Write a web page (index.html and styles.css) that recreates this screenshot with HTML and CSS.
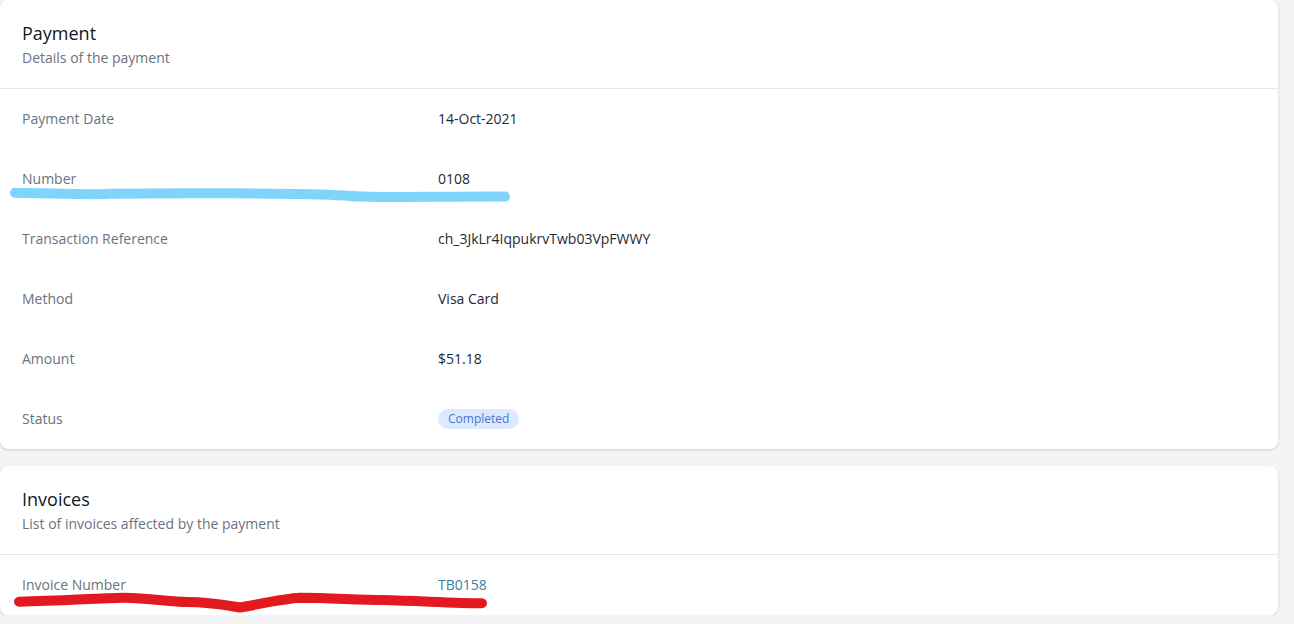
FILE: index.html
```html
<!DOCTYPE html>
<html lang="en">

<head>
    <meta charset="UTF-8">
    <meta name="viewport" content="width=device-width, initial-scale=1.0">
    <title>Payment</title>
    <link rel="stylesheet" href="styles.css">
</head>

<body>
    <div class="page">
        <div class="card">
            <div class="card-header">
                <h2>Payment</h2>
                <p>Details of the payment</p>
            </div>
            <dl class="details">
                <div class="row">
                    <dt>Payment Date</dt>
                    <dd>14-Oct-2021</dd>
                </div>
                <div class="row">
                    <dt>Number</dt>
                    <dd>0108</dd>
                </div>
                <div class="row">
                    <dt>Transaction Reference</dt>
                    <dd>ch_3JkLr4IqpukrvTwb03VpFWWY</dd>
                </div>
                <div class="row">
                    <dt>Method</dt>
                    <dd>Visa Card</dd>
                </div>
                <div class="row">
                    <dt>Amount</dt>
                    <dd>$51.18</dd>
                </div>
                <div class="row">
                    <dt>Status</dt>
                    <dd><span class="badge">Completed</span></dd>
                </div>
            </dl>
        </div>

        <div class="card">
            <div class="card-header">
                <h2>Invoices</h2>
                <p>List of invoices affected by the payment</p>
            </div>
            <dl class="details">
                <div class="row">
                    <dt>Invoice Number</dt>
                    <dd><a href="#">TB0158</a></dd>
                </div>
            </dl>
        </div>
    </div>

    <!-- marker strokes drawn over the screenshot -->
    <svg class="marks" width="1294" height="624" viewBox="0 0 1294 624">
        <path class="mark-blue" d="M15 192.7 C60 193.5 90 195 110 193.8 C170 192.8 300 193 345 195.5 C360 197.5 380 197 430 196.8 C470 196.6 490 196.4 505 196.6" />
        <path class="mark-red" d="M19 601.7 C60 601 100 598 123 597.8 C150 598 170 602 187 602 C210 602 225 605 240 607.5 C260 604 285 598.5 300 597.8 C330 598 360 600 383 600 C420 601 455 603 482 603.3" />
    </svg>
</body>

</html>
```

FILE: styles.css
```css
body {
    margin: 0;
    background-color: #f3f4f6;
    font-family: "Open Sans", "Liberation Sans", sans-serif;
    color: #1f2937;
}

.page {
    padding: 0 16px 0 0;
    display: flex;
    flex-direction: column;
    gap: 17px;
}

.card {
    background-color: #fff;
    border-radius: 8px;
    box-shadow: 0 1px 3px rgba(0, 0, 0, 0.12), 0 1px 2px rgba(0, 0, 0, 0.06);
    overflow: hidden;
}

.card-header {
    padding: 20px 22px;
    border-bottom: 1px solid #e5e7eb;
}

.card-header h2 {
    margin: 0;
    font-size: 18px;
    line-height: 26px;
    font-weight: 400;
    color: #111827;
}

.card-header p {
    margin: 2px 0 0;
    font-size: 14px;
    line-height: 20px;
    color: #6b7280;
}

.details {
    margin: 0;
}

.row {
    display: grid;
    grid-template-columns: 400px 1fr 1fr;
    gap: 16px;
    box-sizing: border-box;
    padding: 0 22px 2px;
    height: 60px;
    align-items: center;
    font-size: 14px;
}

.row dt {
    color: #6b7280;
}

.row dd {
    margin: 0;
    grid-column: span 2;
    color: #1f2937;
}

.row a {
    color: #3b82a6;
    text-decoration: none;
}

.badge {
    display: inline-block;
    padding: 0 10px;
    line-height: 20px;
    font-size: 12px;
    border-radius: 10px;
    background-color: #dbeafe;
    color: #4a76c9;
}

.marks {
    position: absolute;
    top: 0;
    left: 0;
    pointer-events: none;
}

.marks path {
    fill: none;
    stroke-width: 10;
    stroke-linecap: round;
    stroke-linejoin: round;
}

.mark-blue {
    stroke: #80d4fc;
}

.mark-red {
    stroke: #e2191f;
}
```
